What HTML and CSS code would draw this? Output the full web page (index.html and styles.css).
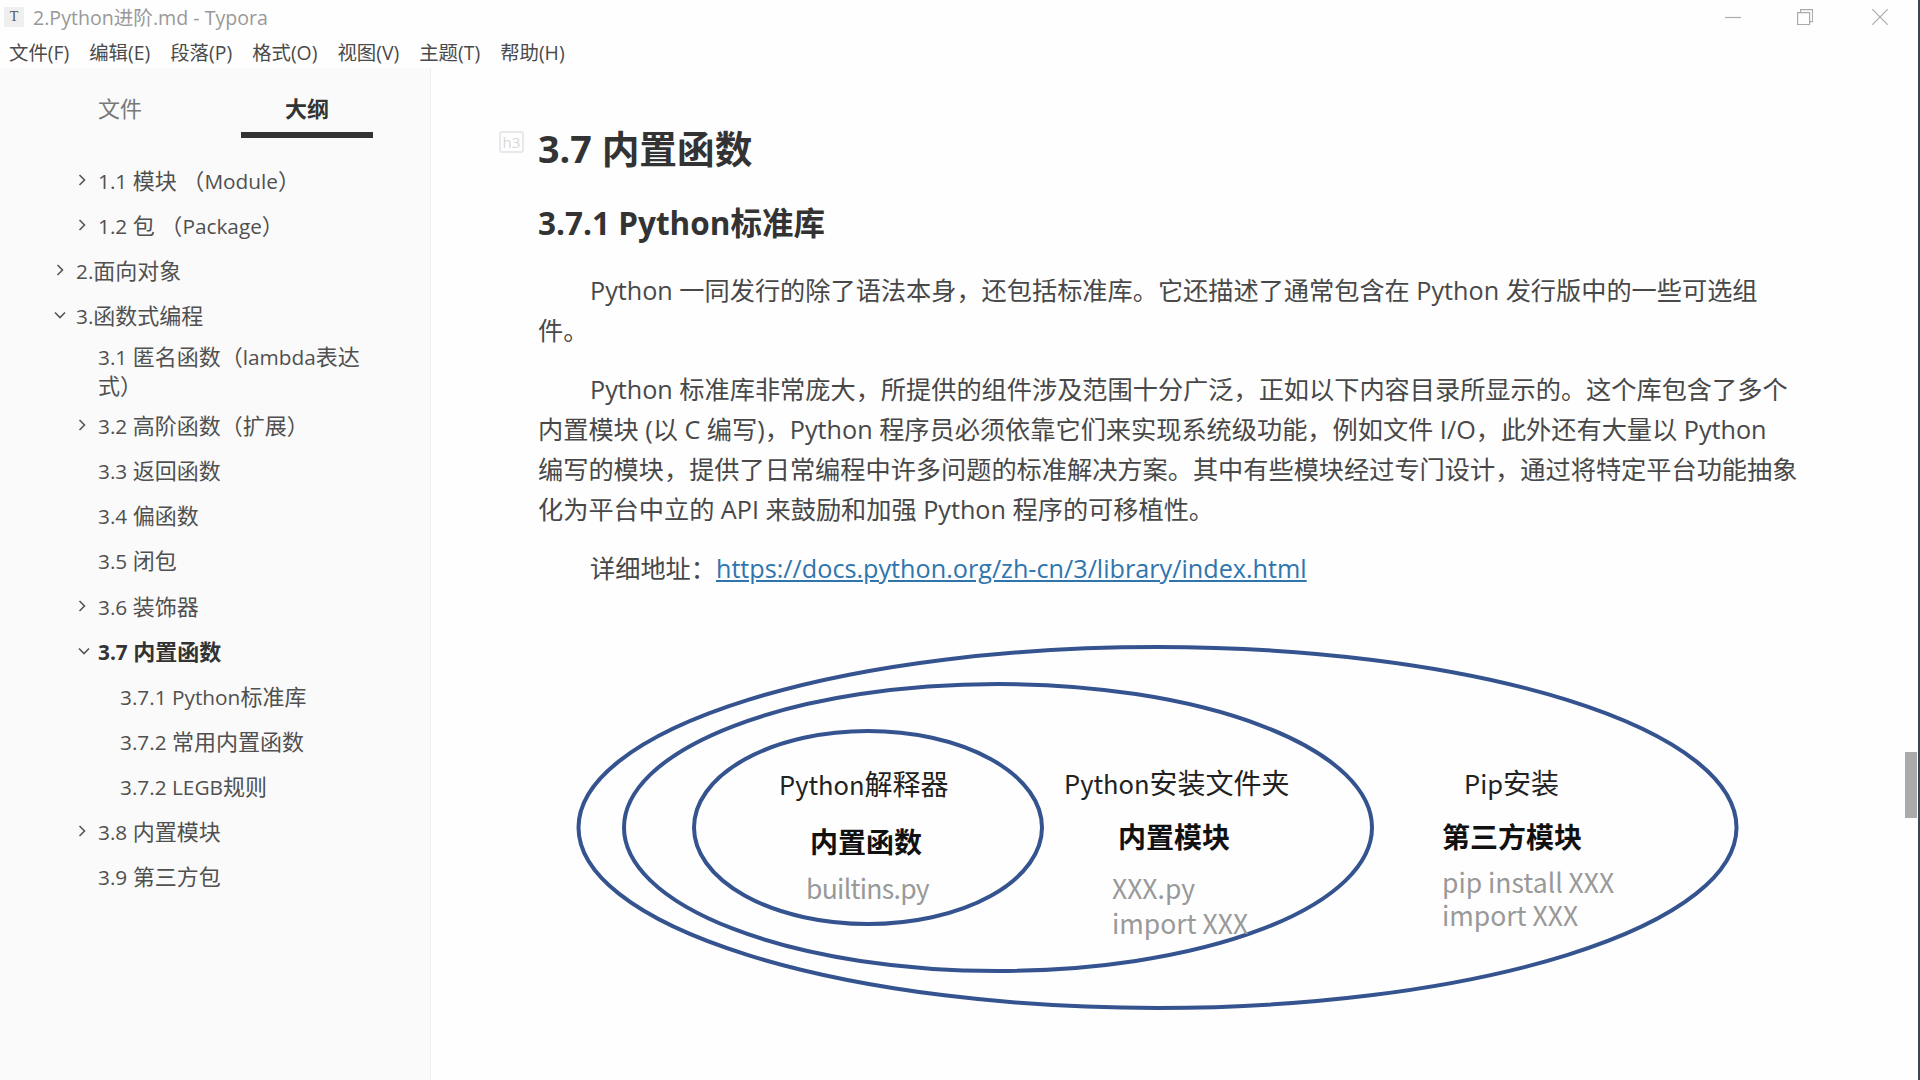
FILE: index.html
```html
<!DOCTYPE html>
<html lang="zh-CN">
<head>
<meta charset="utf-8">
<title>2.Python进阶.md - Typora</title>
<link rel="stylesheet" href="styles.css">
</head>
<body>
<div class="window">
  <header class="titlebar">
    <span class="app-icon">T</span>
    <span class="app-title">2.Python进阶.md - Typora</span>
    <div class="win-controls">
      <svg class="win-icon win-min" viewBox="0 0 16 16"><path d="M0 8.5H16"/></svg>
      <svg class="win-icon win-max" viewBox="0 0 16 16"><path d="M.6 3.6H12.6V15.6H.6Z"/><path d="M3.6 3.4V.6H15.6V12.6H12.8"/></svg>
      <svg class="win-icon win-close" viewBox="0 0 16 16"><path d="M.3.3 15.7 15.7M15.7.3.3 15.7"/></svg>
    </div>
  </header>
  <nav class="menubar">
    <span>文件(F)</span><span>编辑(E)</span><span>段落(P)</span><span>格式(O)</span><span>视图(V)</span><span>主题(T)</span><span>帮助(H)</span>
  </nav>
  <div class="workspace">
    <aside class="sidebar">
      <div class="tabs">
        <div class="tab">文件</div>
        <div class="tab active">大纲</div>
      </div>
      <ul class="outline">
        <li class="row l3"><svg class="chev" viewBox="0 0 12 12"><path d="M3.5 1 8.5 6 3.5 11"/></svg><span><span class="en">1.1 </span>模块 （<span class="en">Module</span>）</span></li>
        <li class="row l3"><svg class="chev" viewBox="0 0 12 12"><path d="M3.5 1 8.5 6 3.5 11"/></svg><span><span class="en">1.2 </span>包 （<span class="en">Package</span>）</span></li>
        <li class="row l2"><svg class="chev" viewBox="0 0 12 12"><path d="M3.5 1 8.5 6 3.5 11"/></svg><span><span class="en">2.</span>面向对象</span></li>
        <li class="row l2"><svg class="chev" viewBox="0 0 12 12"><path d="M1 3.5 6 8.5 11 3.5"/></svg><span><span class="en">3.</span>函数式编程</span></li>
        <li class="row l3 multi"><i class="chev"></i><span><span class="en">3.1 </span>匿名函数（<span class="en">lambda</span>表达<br>式）</span></li>
        <li class="row l3"><svg class="chev" viewBox="0 0 12 12"><path d="M3.5 1 8.5 6 3.5 11"/></svg><span><span class="en">3.2 </span>高阶函数（扩展）</span></li>
        <li class="row l3"><i class="chev"></i><span><span class="en">3.3 </span>返回函数</span></li>
        <li class="row l3"><i class="chev"></i><span><span class="en">3.4 </span>偏函数</span></li>
        <li class="row l3"><i class="chev"></i><span><span class="en">3.5 </span>闭包</span></li>
        <li class="row l3"><svg class="chev" viewBox="0 0 12 12"><path d="M3.5 1 8.5 6 3.5 11"/></svg><span><span class="en">3.6 </span>装饰器</span></li>
        <li class="row l3 current"><svg class="chev" viewBox="0 0 12 12"><path d="M1 3.5 6 8.5 11 3.5"/></svg><span><span class="en">3.7 </span>内置函数</span></li>
        <li class="row l4"><i class="chev"></i><span><span class="en">3.7.1 Python</span>标准库</span></li>
        <li class="row l4"><i class="chev"></i><span><span class="en">3.7.2 </span>常用内置函数</span></li>
        <li class="row l4"><i class="chev"></i><span><span class="en">3.7.2 LEGB</span>规则</span></li>
        <li class="row l3"><svg class="chev" viewBox="0 0 12 12"><path d="M3.5 1 8.5 6 3.5 11"/></svg><span><span class="en">3.8 </span>内置模块</span></li>
        <li class="row l3"><i class="chev"></i><span><span class="en">3.9 </span>第三方包</span></li>
      </ul>
    </aside>
    <main class="content">
      <h3 class="h3"><span class="badge">h3</span>3.7 内置函数</h3>
      <h4 class="h4">3.7.1 Python标准库</h4>
      <p class="para">Python 一同发行的除了语法本身，还包括标准库。它还描述了通常包含在 Python 发行版中的一些可选组<br>件。</p>
      <p class="para">Python 标准库非常庞大，所提供的组件涉及范围十分广泛，正如以下内容目录所显示的。这个库包含了多个<br>内置模块 (以 C 编写)，Python 程序员必须依靠它们来实现系统级功能，例如文件 I/O，此外还有大量以 Python<br>编写的模块，提供了日常编程中许多问题的标准解决方案。其中有些模块经过专门设计，通过将特定平台功能抽象<br>化为平台中立的 API 来鼓励和加强 Python 程序的可移植性。</p>
      <p class="para link-para">详细地址：<a class="link" href="#">https://docs.python.org/zh-cn/3/library/index.html</a></p>
      <svg class="diagram" viewBox="0 0 1260 400">
        <ellipse class="ring" cx="619.5" cy="196.5" rx="579" ry="180.5"/>
        <ellipse class="ring" cx="460" cy="196.5" rx="374" ry="143.5"/>
        <ellipse class="ring" cx="330" cy="196.5" rx="174" ry="96.5"/>
        <text class="d-title" x="241" y="164"><tspan class="d-lat">Python</tspan>解释器</text>
        <text class="d-bold" x="272" y="222">内置函数</text>
        <text class="d-gray d-tight" x="268" y="268">builtins.py</text>
        <text class="d-title" x="526" y="163"><tspan class="d-lat">Python</tspan>安装文件夹</text>
        <text class="d-bold" x="580" y="217">内置模块</text>
        <text class="d-gray" x="574" y="268">XXX.py</text>
        <text class="d-gray" x="574" y="303">import XXX</text>
        <text class="d-title" x="926" y="163"><tspan class="d-lat">Pip</tspan>安装</text>
        <text class="d-bold" x="904" y="217">第三方模块</text>
        <text class="d-gray" x="904" y="262">pip install XXX</text>
        <text class="d-gray" x="904" y="295">import XXX</text>
      </svg>
    </main>
  </div>
  <div class="scroll-thumb"></div>
</div>
</body>
</html>
```
FILE: styles.css
```css
* { box-sizing: border-box; }
html, body { margin: 0; height: 100%; overflow: hidden; background: #fff; }
body { font-family: "Open Sans", "Noto Sans CJK SC", sans-serif; color: #444; }
.window { position: relative; display: flex; flex-direction: column; height: 1080px; border-right: 2px solid #3b4652; background: #fefefe; }

.titlebar { display: flex; align-items: center; height: 36px; padding: 0 30px 3px 4px; gap: 9px; flex: none; }
.app-icon { width: 20px; height: 20px; background: #efefef; color: #555; font: 14px/20px "Liberation Serif", serif; text-align: center; }
.app-title { font-size: 19.6px; color: #999; }
.win-controls { display: flex; align-items: center; margin-left: auto; gap: 56px; }
.win-icon { width: 16px; height: 16px; fill: none; stroke: #aaa; stroke-width: 1.2; display: block; }
.win-max { margin-right: 3px; }

.menubar { display: flex; gap: 20px; height: 32px; padding: 0 0 2px 9px; align-items: center; font-size: 19.4px; color: #4a4a4a; flex: none; }

.workspace { display: flex; flex: 1; min-height: 0; }
.sidebar { width: 431px; flex: none; background: #fafafa; border-right: 1px solid #eee; }
.tabs { display: flex; gap: 55px; height: 70px; padding-left: 54px; }
.tab { width: 132px; text-align: center; font-size: 22px; line-height: 80px; color: #777; }
.tab.active { font-weight: 700; color: #333; border-bottom: 6px solid #333; }

.outline { list-style: none; margin: 0; padding: 20.5px 0 0; font-size: 22px; color: #505050; }
.row { display: flex; align-items: center; height: 45.1px; line-height: 27.5px; }
.row.multi { height: 65px; }
.row.l2 { padding-left: 54px; }
.row.l3 { padding-left: 76px; }
.row.l4 { padding-left: 98px; }
.row.current { font-weight: 700; color: #333; }
.chev { display: block; flex: none; width: 12px; height: 12px; margin-right: 10px; fill: none; stroke: #555; stroke-width: 1.6; margin-top: -2px; }
.en { font-size: 20.8px; }
.current .chev { transform: translateX(2px); }

.content { flex: 1; min-width: 0; padding: 56px 0 0 107px; white-space: nowrap; }
.h3 { position: relative; margin: 0 0 29px; font-size: 37.7px; line-height: 50px; font-weight: 700; color: #333; }
.badge { position: absolute; left: -39px; top: 7px; width: 25px; height: 22px; border: 2px solid #e8e8e8; border-radius: 3px; font-size: 15px; line-height: 18px; font-weight: 400; text-align: center; color: #d8d8d8; }
.h4 { margin: 0 0 27px; font-size: 31.5px; line-height: 40px; font-weight: 700; color: #333; }
.para { margin: 0 0 19px; font-size: 25.2px; line-height: 40px; text-indent: 52px; color: #484848; }
.link-para { margin-bottom: 43px; }
.link { color: #2f75ad; text-decoration: underline; }

.diagram { display: block; width: 1260px; height: 400px; overflow: visible; }
.ring { fill: none; stroke: #34538f; stroke-width: 4; }
.d-title, .d-bold, .d-gray { font-family: "Noto Sans CJK SC", sans-serif; font-size: 28px; }
.d-title { fill: #222; }
.d-lat { font-size: 25.5px; }
.d-bold { fill: #111; font-weight: 700; }
.d-gray { fill: #999; font-size: 26.5px; }
.d-tight { letter-spacing: -0.7px; }

.scroll-thumb { position: absolute; right: 1px; top: 752px; width: 12px; height: 66px; background: #aaa; }
```
